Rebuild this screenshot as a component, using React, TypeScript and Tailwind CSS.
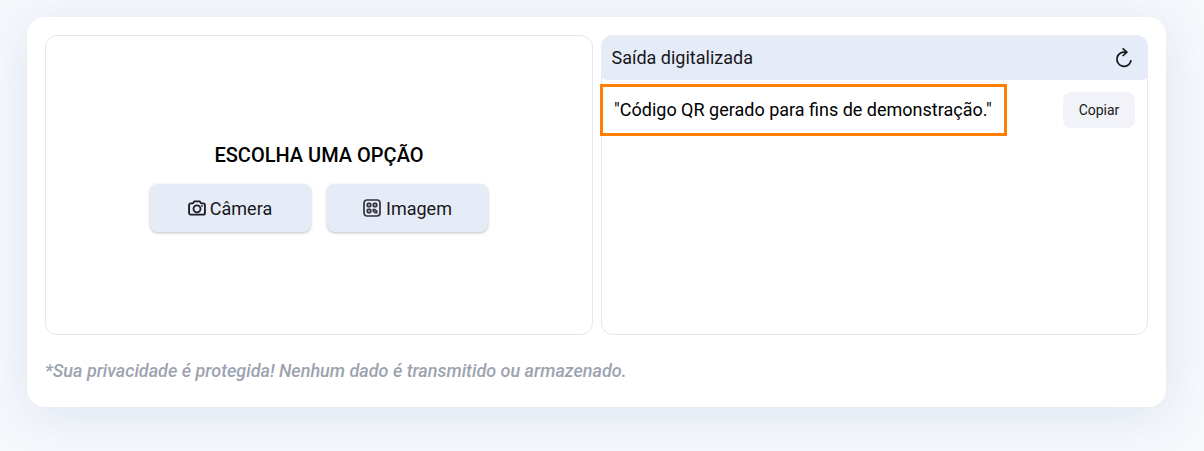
import React from "react";

const font = { fontFamily: "Roboto, sans-serif" };

function CameraIcon() {
  return (
    <svg width="20" height="20" viewBox="0 0 24 24" fill="none" stroke="#1f1f23" strokeWidth="2.2" strokeLinecap="round" strokeLinejoin="round">
      <path d="M2.5 8.5a2 2 0 0 1 2-2h2.7L8.6 4h6.8l1.4 2.5h2.7a2 2 0 0 1 2 2V18a2 2 0 0 1-2 2h-15a2 2 0 0 1-2-2z" />
      <circle cx="12" cy="13" r="4.2" />
      <path d="M18 9.5h.01" />
    </svg>
  );
}

function QrIcon() {
  return (
    <svg width="18" height="18" viewBox="0 0 18 18" fill="none" stroke="#33343a" strokeWidth="1.5">
      <rect x="1" y="1" width="16" height="16" rx="3" strokeWidth="1.7" />
      <rect x="4.2" y="4.2" width="3.6" height="3.6" rx="1" fill="#8d909a" />
      <rect x="10.2" y="4.2" width="3.6" height="3.6" rx="1" fill="#8d909a" />
      <rect x="4.2" y="10.2" width="3.6" height="3.6" rx="1" fill="#8d909a" />
      <path d="M10.2 10.4h1.6l2 1.6v1.8h-1.6l-2-1.6z" fill="#8d909a" />
    </svg>
  );
}

function RefreshIcon() {
  return (
    <svg width="20" height="20" viewBox="0 0 24 24" fill="none" stroke="#18181b" strokeWidth="2" strokeLinecap="round" strokeLinejoin="round">
      <path d="M12 5a8.5 8.5 0 1 0 8.5 8.5" transform="rotate(12 12 13.5)" />
      <path d="M11 1l4.5 3.9L11 9" />
    </svg>
  );
}

export default function App() {
  return (
    <div className="h-[451px] w-[1204px] overflow-hidden bg-[#f6f8fc] pt-[17px] pl-[27px]" style={font}>
      <div className="h-[390px] w-[1139px] rounded-[18px] bg-white p-[18px] shadow-[0_8px_50px_rgba(70,110,170,0.14)]">
        <div className="flex h-[300px] gap-2">
          <div className="flex w-[548px] flex-col items-center justify-center rounded-xl border border-[#e5e7eb] pt-[2px]">
            <h2 className="text-[20px] leading-[30px] font-medium text-black">ESCOLHA UMA OPÇÃO</h2>
            <div className="mt-[14px] flex gap-4">
              <button className="flex h-[48px] w-[161px] items-center justify-center gap-[3px] rounded-lg bg-[#e6ebf8] pr-[2px] text-[18px] text-[#18181b] shadow-[0_1px_3px_rgba(0,0,0,0.25)]">
                <CameraIcon />
                Câmera
              </button>
              <button className="flex h-[48px] w-[161px] items-center justify-center gap-[5px] rounded-lg bg-[#e6ebf8] text-[18px] text-[#18181b] shadow-[0_1px_3px_rgba(0,0,0,0.25)]">
                <QrIcon />
                Imagem
              </button>
            </div>
          </div>
          <div className="flex w-[547px] flex-col rounded-xl border border-[#e5e7eb]">
            <div className="-mx-px -mt-px flex h-[45px] items-center justify-between rounded-t-xl rounded-b-md bg-[#e6ebf8] pr-[14px] pl-[10.5px] text-[18px] text-[#18181b]">
              Saída digitalizada
              <RefreshIcon />
            </div>
            <div className="flex items-start justify-between pr-3">
              <div className="-ml-0.5 mt-1 flex h-[52px] w-[407px] items-center border-[3px] border-[#ff8000] pb-[2px] pl-[11px] text-[18px] text-black">
                "Código QR gerado para fins de demonstração."
              </div>
              <button className="mt-3 h-9 w-[72px] rounded-lg bg-[#f1f3f8] text-[14px] text-[#18181b]">Copiar</button>
            </div>
          </div>
        </div>
        <p className="mt-[22px] text-[18px] leading-[27px] font-medium text-[#9ca3af] italic">
          *Sua privacidade é protegida! Nenhum dado é transmitido ou armazenado.
        </p>
      </div>
    </div>
  );
}
